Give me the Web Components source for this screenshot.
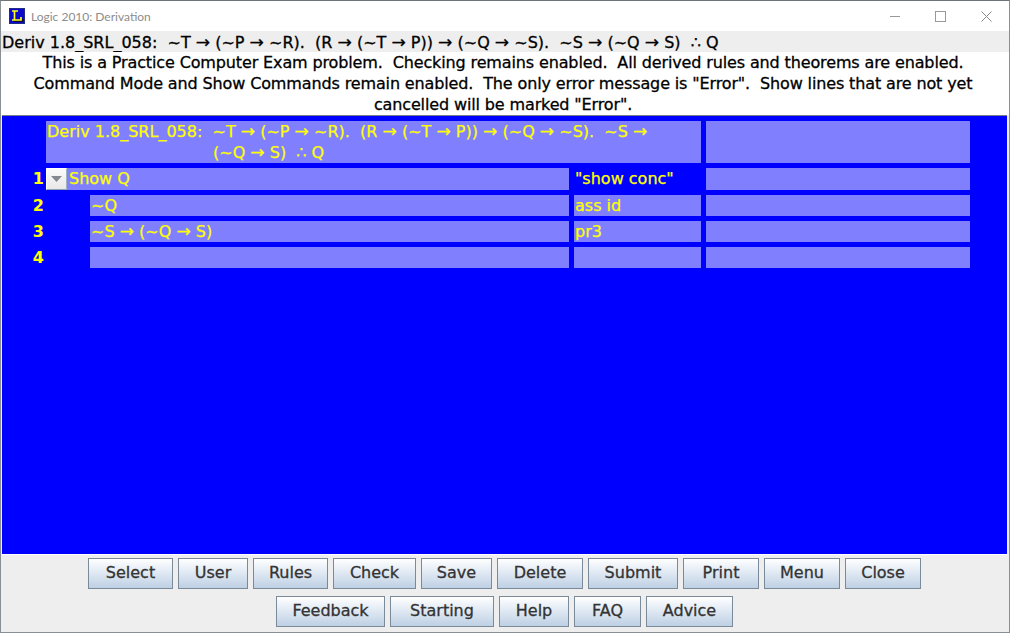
<!DOCTYPE html>
<html lang="en"><head><meta charset="utf-8"><title>Logic 2010: Derivation</title>
<style>
html,body{margin:0;padding:0;background:#eee;overflow:hidden}
body{width:1010px;height:633px;font-family:"DejaVu Sans",sans-serif}
</style></head><body>
<logic-window>
  <title-bar slot="title">Logic 2010: Derivation</title-bar>
  <problem-line slot="problem">Deriv 1.8_SRL_058:&nbsp; ~T <a-r>→</a-r> (~P <a-r>→</a-r> ~R).&nbsp; (R <a-r>→</a-r> (~T <a-r>→</a-r> P)) <a-r>→</a-r> (~Q <a-r>→</a-r> ~S).&nbsp; ~S <a-r>→</a-r> (~Q <a-r>→</a-r> S)&nbsp; ∴ Q</problem-line>
  <notice-text slot="notice">This is a Practice Computer Exam problem.&nbsp; Checking remains enabled.&nbsp; All derived rules and theorems are enabled.<br>Command Mode and Show Commands remain enabled.&nbsp; The only error message is "Error".&nbsp; Show lines that are not yet<br>cancelled will be marked "Error".</notice-text>
  <deriv-panel slot="panel">
    <deriv-head>Deriv 1.8_SRL_058:&nbsp; ~T <a-r>→</a-r> (~P <a-r>→</a-r> ~R).&nbsp; (R <a-r>→</a-r> (~T <a-r>→</a-r> P)) <a-r>→</a-r> (~Q <a-r>→</a-r> ~S).&nbsp; ~S <a-r>→</a-r><span slot="second">(~Q <a-r>→</a-r> S)&nbsp; ∴ Q</span></deriv-head>
    <deriv-row num="1" show note-plain note='"show conc"'>Show&nbsp;Q</deriv-row>
    <deriv-row num="2" note="ass id">~Q</deriv-row>
    <deriv-row num="3" note="pr3">~S <a-r>→</a-r> (~Q <a-r>→</a-r> S)</deriv-row>
    <deriv-row num="4" note=""></deriv-row>
  </deriv-panel>
  <button-bar slot="buttons">
    <button-row>
      <logic-button w="85">Select</logic-button><logic-button w="70">User</logic-button><logic-button w="75">Rules</logic-button><logic-button w="83">Check</logic-button><logic-button w="71">Save</logic-button><logic-button w="86">Delete</logic-button><logic-button w="90">Submit</logic-button><logic-button w="76">Print</logic-button><logic-button w="76">Menu</logic-button><logic-button w="76">Close</logic-button>
    </button-row>
    <button-row>
      <logic-button w="109">Feedback</logic-button><logic-button w="104">Starting</logic-button><logic-button w="70">Help</logic-button><logic-button w="67">FAQ</logic-button><logic-button w="87">Advice</logic-button>
    </button-row>
  </button-bar>
</logic-window>
<script>
const FONT='"DejaVu Sans",sans-serif';
function def(name,css,html,init){
  customElements.define(name,class extends HTMLElement{
    constructor(){super();const r=this.attachShadow({mode:'open'});
      r.innerHTML='<style>'+css+'</style>'+html;}
    connectedCallback(){if(init)init(this,this.shadowRoot);}
  });
}
def('a-r',`:host{display:inline;font-size:1.07em;line-height:1}`,`<slot></slot>`);
def('logic-window',`
  :host{display:flex;flex-direction:column;width:1010px;height:633px;box-sizing:border-box;background:#eee;
    border-left:1px solid #8a8f94;border-right:1px solid #8a8f94;border-top:1px solid #6f7479;border-bottom:1px solid #8a8f94;font-family:${FONT}}
`,`<slot name="title"></slot><slot name="problem"></slot><slot name="notice"></slot><slot name="panel"></slot><slot name="buttons"></slot>`);
def('title-bar',`
  :host{display:flex;align-items:center;flex:none;height:30px;background:#fff;color:#8c8c8c;font:12px Lato,"Open Sans",sans-serif;box-sizing:border-box;padding-left:8px}
  svg{flex:none;display:block}
  .t{margin-left:6px;flex:1}
  .c{flex:none;display:flex;align-items:center}
  .m{width:10px;height:1px;background:#999;margin-right:35px}
`,`<svg width="16" height="16" viewBox="0 0 16 16"><rect width="16" height="16" fill="#0a0ac8"/><rect x=".5" y=".5" width="15" height="15" fill="none" stroke="#222a88"/><path d="M5.5 4.5v8.5h8v-2" fill="none" stroke="#111" stroke-width="1.6"/><path d="M3 3h6M5.5 3v9M3 12h9v-3" fill="none" stroke="#ffff22" stroke-width="1.7"/></svg>
<span class="t"><slot></slot></span>
<span class="c"><span class="m"></span>
<svg width="11" height="11" viewBox="0 0 11 11" style="margin-right:35px"><rect x=".5" y=".5" width="10" height="10" fill="none" stroke="#999"/></svg>
<svg width="11" height="11" viewBox="0 0 11 11" style="margin-right:17px"><path d="M.5.5l10 10M10.5.5l-10 10" stroke="#888" fill="none"/></svg></span>`);
def('problem-line',`
  :host{display:block;flex:none;height:21px;line-height:21px;background:#eee;color:#000;font-size:16px;padding:1px 0 0 1px;box-sizing:border-box;white-space:nowrap;-webkit-text-stroke:.3px #000}
`,`<slot></slot>`);
def('notice-text',`
  :host{display:block;flex:none;height:63px;background:#fff;color:#000;font-size:16px;line-height:21px;text-align:center;white-space:nowrap;-webkit-text-stroke:.3px #000;padding-right:4px;box-sizing:border-box;letter-spacing:-.13px}
`,`<slot></slot>`);
def('deriv-panel',`
  :host{display:flex;flex-direction:column;flex:none;height:440px;box-sizing:border-box;background:#0000ff;margin-right:2px;margin-left:1px;padding:5px 0 0 44px;border-top:1px solid #7a8088;border-bottom:1px solid #fff}
`,`<slot></slot>`);
def('deriv-head',`
  :host{display:grid;grid-template-columns:655px 264px;column-gap:5px;height:42px;margin-bottom:5px;color:#ff0}
  .a,.b{background:#8080ff}
  .a{font-size:16px;line-height:21px;white-space:nowrap;-webkit-text-stroke:.25px #ff0;padding-left:1px}
  .l{display:block}
  .l2{display:block;padding-left:166px}
`,`<div class="a"><span class="l"><slot></slot></span><span class="l2"><slot name="second"></slot></span></div><div class="b"></div>`);
def('deriv-row',`
  :host{display:grid;grid-template-columns:523px 127px 264px;column-gap:5px;height:21px;margin-bottom:5px;color:#ff0;font-size:16px;line-height:21px;position:relative}
  :host([show]){height:22px}
  .n{position:absolute;right:100%;margin-right:2px;top:0;font-weight:700;font-size:16px}
  .main{display:flex;min-width:0;padding-left:44px}
  :host([show]) .main{padding-left:0}
  .f{flex:1;background:#8080ff;padding-left:1px;white-space:nowrap;-webkit-text-stroke:.25px #ff0}
  :host([show]) .f{padding-left:2px}
  .note,.x{background:#8080ff}
  .note{padding-left:1px;white-space:nowrap;-webkit-text-stroke:.25px #ff0}
  :host([note-plain]) .note{background:none}
  .dd{flex:none;width:21px;height:22px;box-sizing:border-box;background:linear-gradient(#fafafa,#e8e8e8);border:1px solid #fff;border-right-color:#9fb2c4;border-bottom:1px solid #8fa3b6;display:flex;align-items:center;justify-content:center}
  .dd svg{display:block}
`,`<span class="n"></span><div class="main"><div class="f"><slot></slot></div></div><div class="note"></div><div class="x"></div>`,
(h,r)=>{
  r.querySelector('.n').textContent=h.getAttribute('num');
  r.querySelector('.note').textContent=h.getAttribute('note');
  if(h.hasAttribute('show')&&!r.querySelector('.dd')){
    const d=document.createElement('div');d.className='dd';
    d.innerHTML='<svg width="11" height="6" viewBox="0 0 11 6"><path d="M0 0h11L5.5 6z" fill="#84898f"/></svg>';
    const m=r.querySelector('.main');m.insertBefore(d,m.firstChild);
  }
});
def('button-bar',`
  :host{display:flex;flex-direction:column;align-items:center;gap:7px;flex:1;padding:3px 1px 0 0;box-sizing:border-box}
`,`<slot></slot>`);
def('button-row',`
  :host{display:flex;gap:5px;height:31px}
`,`<slot></slot>`);
def('logic-button',`
  :host{display:flex;align-items:center;justify-content:center;box-sizing:border-box;height:100%;border:1px solid #7a8a99;background:linear-gradient(#fff 0%,#eef3f9 25%,#bed0e4 100%);color:#333;font-size:16px;padding-bottom:2px;-webkit-text-stroke:.3px #333;white-space:nowrap}
`,`<slot></slot>`,(h)=>{h.style.width=h.getAttribute('w')+'px';});
</script>
</body></html>
